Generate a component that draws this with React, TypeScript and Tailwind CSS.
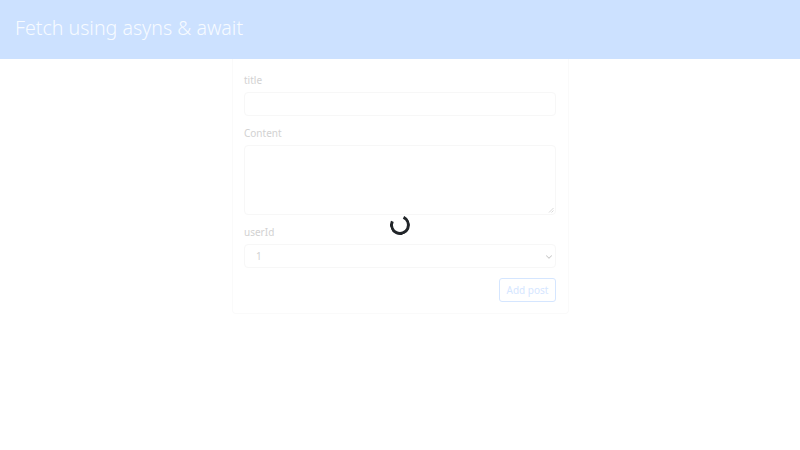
import { ChevronDown } from 'lucide-react'

function Field({ label, children }: { label: string; children: React.ReactNode }) {
  return (
    <div className="flex flex-col">
      <label className="mb-[3px] h-[17px] text-[10px] leading-[17px] text-[#d2d2d2]">{label}</label>
      {children}
    </div>
  )
}

export default function App() {
  return (
    <div className="relative h-[450px] w-[800px] overflow-hidden bg-white font-['Noto_Sans',sans-serif]">
      <header className="flex h-[59px] items-center bg-[#cce1ff] pb-[4px] pl-[15px]">
        <h1 className="text-[19.6px] font-light text-[#f7fbff]">Fetch using asyns &amp; await</h1>
      </header>

      <form className="ml-[232px] flex h-[255px] w-[337px] flex-col rounded-b border border-t-0 border-[#fafafa] pt-[13px] pr-3 pl-[11px]">
        <Field label="title">
          <input className="h-6 rounded border border-[#f7f7f7]" />
        </Field>
        <div className="mt-[9px]">
          <Field label="Content">
            <div className="relative h-[70px] rounded border border-[#f7f7f7]">
              <svg className="absolute right-[1px] bottom-[1px]" width="6" height="6" viewBox="0 0 6 6">
                <path d="M1 5.5 5.5 1M3.5 5.5 5.5 3.5" stroke="#d8d8d8" strokeWidth="1" />
              </svg>
            </div>
          </Field>
        </div>
        <div className="mt-[9px]">
          <Field label="userId">
            <div className="flex h-6 items-center justify-between rounded border border-[#f7f7f7] pt-[1px] pr-[1px] pl-[11px] text-[10px] text-[#d2d2d2]">
              <span>1</span>
              <ChevronDown size={10} strokeWidth={2.5} className="text-[#c8c8c8]" />
            </div>
          </Field>
        </div>
        <div className="mt-[10px] flex justify-end">
          <button
            type="button"
            className="h-6 w-[57px] rounded-[3px] border border-[#d5e6ff] text-[10px] text-[#d5e6ff]"
          >
            Add post
          </button>
        </div>
      </form>

      {/* loading spinner over the form */}
      <div className="absolute top-[215px] left-[390px] h-5 w-5 -rotate-[110deg] rounded-full border-[3px] border-[#212529] border-r-transparent" />
    </div>
  )
}
